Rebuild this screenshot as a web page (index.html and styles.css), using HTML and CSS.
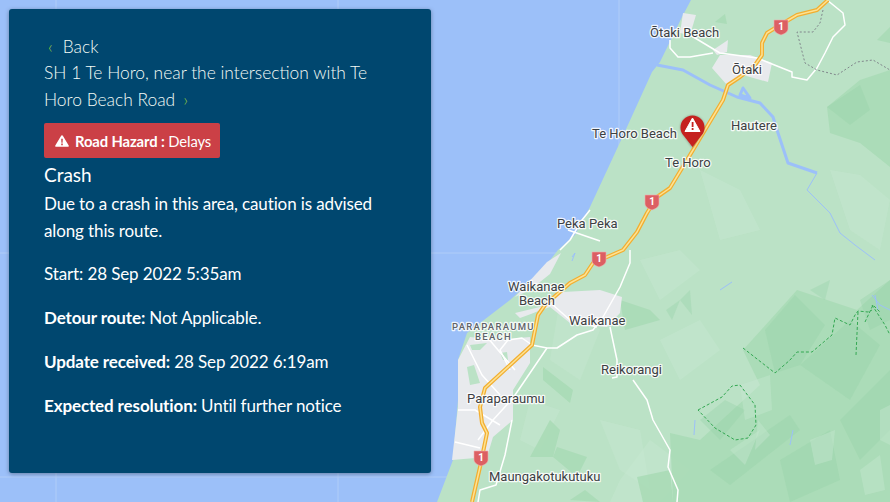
FILE: index.html
```html
<!DOCTYPE html>
<html lang="en">
<head>
<meta charset="utf-8">
<title>Road Hazard</title>
<link rel="stylesheet" href="styles.css">
</head>
<body>
<main class="stage">
<svg class="map" viewBox="0 0 890 502" width="890" height="502" aria-label="Map">
  <defs>
    <filter id="pinBlur" x="-30%" y="-30%" width="160%" height="160%"><feGaussianBlur stdDeviation="1.200"/></filter>
  </defs>
  <rect class="water" width="890" height="502"/>
  <path class="grid" d="M56 0V502M338 0V502M619 0V502M0 477H890M0 253H890"/>
  <path class="land" d="M691 0L682 17L660 62L652 72L622 138L590 207L575 235L558 250L540 273L510 300L467 333L458 360L458 400L453 460L437 502H890V0Z"/>
  <g class="t3">
    <path d="M620 480L650 440L690 470L660 502H610Z"/>
    <path d="M640 260L680 250L700 270L660 300Z"/>
    <path d="M700 170L740 190L760 230L720 240Z"/>
    <path d="M830 170L860 175L890 200L880 250L850 230Z"/>
    <path d="M560 300L600 330L580 380L550 360Z"/>
    <path d="M530 400L560 410L540 450L520 440Z"/>
    <path d="M600 420L640 430L650 490L620 470Z"/>
    <path d="M660 340L700 320L720 350L680 380Z"/>
  </g>
  <g class="t1">
    <path d="M743 350L797 290L857 310L890 280V502H673L670 433L700 440L760 385Z"/>
    <path d="M827 107L860 80L890 70V167L860 143L830 133Z"/>
    <path d="M877 40L890 27V43Z"/>
    <path d="M530 457L550 420L560 430L553 457Z"/>
    <path d="M557 447L587 457L577 477L553 457Z"/>
    <path d="M637 477L670 470L673 502H643Z"/>
    <path d="M543 367L573 390L570 403L543 380Z"/>
    <path d="M570 500L585 490L600 502Z"/>
    <path d="M620 300L650 310L660 320L625 330Z"/>
    <path d="M715 22L725 14L727 24Z"/>
  </g>
  <g class="t2">
    <path d="M827 107L860 85L870 110L850 125Z"/>
    <path d="M765 330L795 295L825 325L800 365L775 373Z"/>
    <path d="M800 365L850 320L880 345L850 400Z"/>
    <path d="M710 470L790 415L800 430L730 485Z"/>
    <path d="M840 420L890 370V430L860 460Z"/>
    <path d="M780 460L830 430L840 480L790 502Z"/>
    <path d="M700 420L725 400L745 410L720 440Z"/>
    <path d="M860 300L890 280V320L870 330Z"/>
    <path d="M680 300L690 290L692 315Z"/>
    <path d="M666 310L680 300L672 320Z"/>
    <path d="M810 290L830 280L825 300Z"/>
  </g>
  <g class="t3">
    <path d="M740 385L770 375L772 410L745 420Z"/>
    <path d="M810 440L835 430L832 460L815 465Z"/>
    <path d="M880 410L890 405V445L880 440Z"/>
    <path d="M730 450L760 430L745 465Z"/>
    <path d="M860 470L880 455L885 490L865 495Z"/>
    <path d="M758 420L770 435L755 450Z"/>
  </g>
  <g class="urban">
    <path d="M683 13L696 15L690 35L680 33Z"/>
    <path d="M713 50L728 40L727 52L717 55Z"/>
    <path d="M712 68L720 55L750 55L772 63L768 82L743 75L727 85Z"/>
    <path d="M515 313L540 307L563 292L600 290L622 297L620 313L607 327L570 323L550 307L520 318Z"/>
    <path d="M458 360L470 337L497 340L530 337L530 363L513 390L513 420L493 437L487 457L452 460L458 407Z"/>
    <path d="M547 262L561 253L550 274L530 290L515 297Z"/>
  </g>
  <g class="hole">
    <path d="M467 367L474 365L480 383L470 385Z"/>
    <path d="M470 345L487 343L480 350L472 350Z"/>
    <path d="M500 353L507 352L508 360L503 360Z"/>
    <path d="M530 315L545 308L520 322Z"/>
  </g>
  <g class="river">
    <path d="M657 65L683 70L710 85L737 97L760 103L773 117L778 133L788 163L817 173"/>
    <path d="M743 88L750 98L740 95Z"/>
  </g>
  <g class="stream">
    <path d="M817 173L807 190L830 213L840 233"/>
    <path d="M840 233L855 245L875 260M878 310L875 295"/>
    <path d="M872 295L880 305L890 310"/>
    <path d="M720 290L732 282M695 420L694 435M793 430L790 445"/>
    <path d="M572 257L575 253L572 261" />
  </g>
  <g class="road">
    <path d="M827 0L843 13L845 25L833 37L825 53L817 68L807 80L792 77L792 72L767 62L757 58"/>
    <path d="M670 40L670 48L678 57L690 57L713 53"/>
    <path d="M690 35L720 53L757 58"/>
    <path d="M590 210L582 220L570 240L560 250"/>
    <path d="M600 241L568 230"/>
    <path d="M630 250L630 263L620 287L603 317L593 330L577 335L557 348L547 348L532 345"/>
    <path d="M547 348L513 398L493 420L478 440"/>
    <path d="M610 327L617 360L617 377L612 378M633 380L647 400L653 420L670 450L668 467L678 490L677 502"/>
    <path d="M553 305L570 320L597 327"/>
    <path d="M532 345L522 338L508 340L500 350L510 370"/>
    <path d="M467 345L482 375L500 395M488 338L498 350L515 370M458 410L475 410L500 425"/>
    <path d="M455 442L480 448M512 420L505 455L496 485L480 490L478 502"/>
  </g>
  <path class="trail-grey" d="M823 10L820 23L813 32L797 32L805 63L817 70L837 75L857 62L873 60L890 70"/>
  <path class="trail-green" d="M743 348L775 373L790 360L797 352L812 352L832 335L835 318L850 325L855 315L858 311L868 312L872 310M858 312L856 355M865 322L873 305L880 312M872 305L885 325L890 335"/>
  <path class="trail-green" d="M698 410L722 397L732 386L740 385L755 405L756 425L748 438L735 440L715 428Z"/>
  <path class="hw-edge" d="M828 0L817 10L797 15L780 25L767 33L762 43L762 55L755 65L740 77L728 85L723 100L693 150L670 188L657 197L647 213L637 232L623 250L607 257L593 263L585 275L570 283L545 305L538 315L532 345L485 388L480 407L482 423L487 433L480 467L472 502"/>
  <path class="hw" d="M828 0L817 10L797 15L780 25L767 33L762 43L762 55L755 65L740 77L728 85L723 100L693 150L670 188L657 197L647 213L637 232L623 250L607 257L593 263L585 275L570 283L545 305L538 315L532 345L485 388L480 407L482 423L487 433L480 467L472 502"/>
  <g class="shield-set">
    <g transform="translate(781,27)"><path class="shield" d="M-7-7H7V2C7 5 3 7 0 8C-3 7-7 5-7 2Z"/><text class="shield-num" y="3">1</text></g>
    <g transform="translate(652,202)"><path class="shield" d="M-7-7H7V2C7 5 3 7 0 8C-3 7-7 5-7 2Z"/><text class="shield-num" y="3">1</text></g>
    <g transform="translate(599,259)"><path class="shield" d="M-7-7H7V2C7 5 3 7 0 8C-3 7-7 5-7 2Z"/><text class="shield-num" y="3">1</text></g>
    <g transform="translate(481,458)"><path class="shield" d="M-7-7H7V2C7 5 3 7 0 8C-3 7-7 5-7 2Z"/><text class="shield-num" y="3">1</text></g>
  </g>
  <g class="labels">
    <text x="650" y="37">Ōtaki Beach</text>
    <text x="732" y="74">Ōtaki</text>
    <text x="731" y="130">Hautere</text>
    <text x="592" y="138">Te Horo Beach</text>
    <text x="665" y="167">Te Horo</text>
    <text x="557" y="228">Peka Peka</text>
    <text x="508" y="291">Waikanae</text>
    <text x="519" y="305">Beach</text>
    <text x="569" y="325">Waikanae</text>
    <text x="601" y="374">Reikorangi</text>
    <text x="467" y="403">Paraparaumu</text>
    <text x="489" y="481">Maungakotukutuku</text>
    <text class="caps" x="452" y="330">PARAPARAUMU</text>
    <text class="caps" x="475" y="340">BEACH</text>
  </g>
  <g class="pin">
    <path class="pin-shadow" filter="url(#pinBlur)" d="M692.500 148L684 136A12 12 0 1 1 701 136Z"/>
    <path class="pin-shape" d="M692.500 147L684 136A12 12 0 1 1 701 136Z"/>
    <path class="pin-icon" d="M692.500 118L700 131.500H685Z"/>
    <rect class="pin-mark" x="691.700" y="122" width="1.800" height="5"/>
    <rect class="pin-mark" x="691.700" y="128" width="1.800" height="2"/>
  </g>
</svg>
<section class="panel">
  <a class="back"><span class="chev chev-back">‹</span>Back</a>
  <a class="location">SH 1 Te Horo, near the intersection with Te Horo Beach Road<span class="chev chev-next">›</span></a>
  <div class="badge">
    <svg class="badge-icon" viewBox="0 0 14 12" width="14" height="12"><path class="badge-tri" d="M7 0.300C7.500 0.300 7.800 0.500 8 0.900L13.700 10.500C14 11.200 13.600 11.800 12.900 11.800H1.100C0.400 11.800 0 11.200 0.300 10.500L6 0.900C6.200 0.500 6.500 0.300 7 0.300Z"/><path class="badge-mark" d="M6.200 3.700H7.800L7.600 7.700H6.400ZM6.200 8.600H7.800V10.200H6.200Z"/></svg>
    <strong>Road Hazard :</strong>&nbsp;<span>Delays</span>
  </div>
  <h2 class="title">Crash</h2>
  <p class="desc">Due to a crash in this area, caution is advised along this route.</p>
  <p class="row">Start: 28 Sep 2022 5:35am</p>
  <p class="row"><strong>Detour route:</strong> Not Applicable.</p>
  <p class="row"><strong>Update received:</strong> 28 Sep 2022 6:19am</p>
  <p class="row"><strong>Expected resolution:</strong> Until further notice</p>
</section>
</main>
</body>
</html>
```
FILE: styles.css
```css
* { box-sizing: border-box; }
html, body { margin: 0; padding: 0; }
body { width: 890px; height: 502px; overflow: hidden; font-family: Lato, "Noto Sans", sans-serif; }
.stage { position: relative; width: 890px; height: 502px; padding: 9px; }
.map { position: absolute; left: 0; top: 0; display: block; }
.water { fill: #9cc0f9; }
.grid { fill: none; stroke: #b0cdf8; stroke-width: 1; }
.land { fill: #bbe2c6; }
.t1 path { fill: #a8dab5; opacity: .85; }
.t2 path { fill: #94d2a5; opacity: .35; }
.t3 path { fill: #c9e9d2; opacity: .4; }
.urban path { fill: #e8eaed; }
.hole path { fill: #bbe2c6; }
.river path { fill: none; stroke: #9cc0f9; stroke-width: 3; stroke-linejoin: round; }
.stream path { fill: none; stroke: #9cc0f9; stroke-width: 1; }
.road path { fill: none; stroke: #fff; stroke-width: 1.500; stroke-linejoin: round; }
.trail-grey { fill: none; stroke: #80868b; stroke-width: 1; stroke-dasharray: 2 2; }
.trail-green { fill: none; stroke: #34a853; stroke-width: 1; stroke-dasharray: 3 2; }
.hw-edge { fill: none; stroke: #f2ae30; stroke-width: 4; stroke-linejoin: round; }
.hw { fill: none; stroke: #fde293; stroke-width: 1.500; stroke-linejoin: round; }
.shield { fill: #dc5f63; stroke: #f1b0b0; stroke-width: .6; }
.shield-num { fill: #fff; font: 700 10px Roboto, sans-serif; text-anchor: middle; }
.labels text { fill: #3c4043; font: 400 13px Roboto, sans-serif; stroke: #fff; stroke-width: 2.500px; stroke-opacity: .85; paint-order: stroke; stroke-linejoin: round; }
.labels .caps { font-size: 9.500px; font-weight: 500; letter-spacing: 1.300px; fill: #5f6368; }
.pin-shadow { fill: rgba(60,30,30,.35); }
.pin-shape { fill: #c5221f; }
.pin-icon { fill: #fff; stroke: #fff; stroke-width: 1; stroke-linejoin: round; }
.pin-mark { fill: #c5221f; }
.panel { position: relative; width: 422px; height: 464px; padding: 25px 35px 0; background: #00476f; border-radius: 3px; box-shadow: 0 1px 4px rgba(0,0,0,.35); color: #fff; font-size: 17px; letter-spacing: -.12px; line-height: 26.500px; }
.back, .location { display: block; color: #f4fbf6; font-weight: 300; font-size: 17.400px; letter-spacing: 0; line-height: 27px; }
.back { padding-left: 4px; line-height: 25px; }
.chev { color: #8dc63f; }
.chev-back { margin-right: 10px; }
.chev-next { margin-left: 8px; }
.location { margin-bottom: 10px; }
.badge { display: flex; align-items: center; width: 176px; height: 35px; padding-left: 11px; background: #cb4046; border-radius: 2px; font-size: 14.800px; line-height: 20px; }
.badge-icon { margin-right: 6px; }
.badge-tri { fill: #fff; }
.badge-mark { fill: #cb4046; }
.badge strong { font-weight: 700; }
.title { margin: 3px 0 0; font-size: 19px; font-weight: 400; line-height: 28px; letter-spacing: 0; }
.desc { margin: 2px 0 17px; }
.row { margin: 0 0 17.500px; }
.row strong { font-weight: 700; }
```
